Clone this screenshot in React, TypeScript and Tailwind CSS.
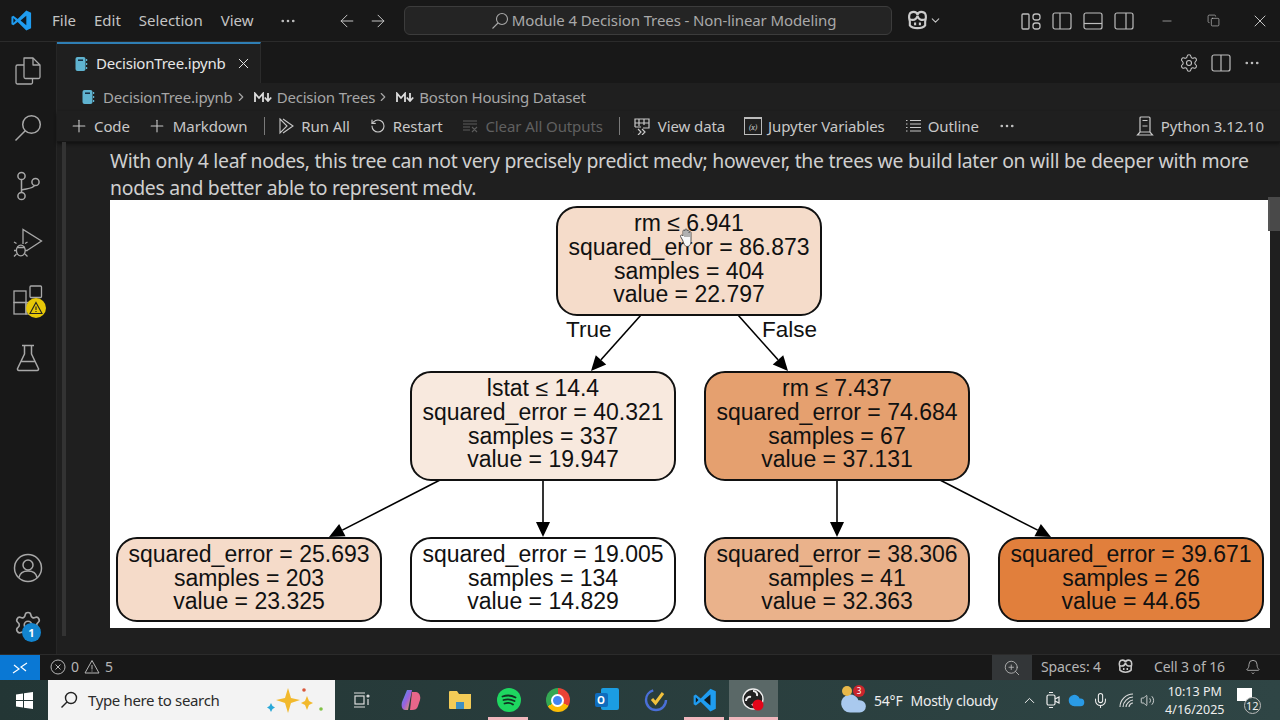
import React from "react";
import {
  Plus, RotateCcw, Settings, MoreHorizontal, X, ArrowLeft, ArrowRight,
  ChevronRight, ChevronDown, ChevronUp, Minus, Bell, ZoomIn, Mic, Volume2, Cloud, Copy,
} from "lucide-react";

const ui = "font-['Noto_Sans','Open_Sans',sans-serif]";

function Notebook({ s = 16 }: { s?: number }) {
  return (
    <svg width={s} height={s} viewBox="0 0 16 16">
      <rect x="2.5" y="1" width="10" height="14" rx="2" fill="#5fb3d0" />
      <rect x="5" y="3.5" width="5" height="1.4" fill="#123" />
      <rect x="13" y="3" width="1.2" height="2" fill="#5fb3d0" />
      <rect x="13" y="7" width="1.2" height="2" fill="#5fb3d0" />
      <rect x="13" y="11" width="1.2" height="2" fill="#5fb3d0" />
    </svg>
  );
}

function VsLogo({ s = 24 }: { s?: number }) {
  return (
    <svg width={s} height={s} viewBox="0 0 24 24">
      <path d="M17 1.5 L22 4 V20 L17 22.5 L8 13.5 L3.5 17 L1.5 16 V8 L3.5 7 L8 10.5 Z" fill="#1f9cf0" />
      <path d="M17 7 L11 12 L17 17 Z" fill="#0f1a22" />
      <path d="M3.5 9.5 L6 12 L3.5 14.5 Z" fill="#0f1a22" />
    </svg>
  );
}

function Copilot({ s = 22, c = "#cccccc" }: { s?: number; c?: string }) {
  return (
    <svg width={s} height={s} viewBox="0 0 24 24" fill="none" stroke={c} strokeWidth="2.2">
      <path d="M4 13 C2 6 4 3 8 3 C10 3 11.5 4 12 6 C12.5 4 14 3 16 3 C20 3 22 6 20 13 V17 C17 21 7 21 4 17 Z" />
      <path d="M4 11 C8 12 11 11 12 7 C13 11 16 12 20 11" />
      <path d="M9.5 14 V17 M14.5 14 V17" />
    </svg>
  );
}

function Pane({ kind }: { kind: "left" | "bottom" | "right" | "split" }) {
  return (
    <svg width="22" height="22" viewBox="0 0 22 22" fill="none" stroke="#bdbdbd" strokeWidth="1.2">
      <rect x="2" y="3" width="18" height="16" rx="2" />
      {kind === "left" && <path d="M9 3 V19" />}
      {kind === "split" && <path d="M11 3 V19" />}
      {kind === "right" && <path d="M13 3 V19" />}
      {kind === "bottom" && <path d="M2 13.5 H20" />}
    </svg>
  );
}

function Node({ x, y, h, pb, fill, lines }: { x: number; y: number; h: number; pb: number; fill: string; lines: string[] }) {
  return (
    <div
      className="absolute w-[266px] rounded-[21px] border-2 border-[#111] flex flex-col items-center justify-center text-[#111] text-[23px] leading-[23.7px] font-['Liberation_Sans',sans-serif]"
      style={{ left: x, top: y, height: h, background: fill, paddingBottom: pb }}
    >
      {lines.map((l) => <div key={l}>{l}</div>)}
    </div>
  );
}

function Tree() {
  const edges = [
    [531, 115, 481, 171],
    [628, 115, 678, 171],
    [330, 280, 219, 337],
    [433, 280, 433, 337],
    [727, 280, 727, 337],
    [830, 280, 941, 337],
  ];
  return (
    <div className="relative w-[1160px] h-[428px] bg-white overflow-hidden shrink-0">
      <svg className="absolute inset-0" width="1160" height="428">
        {edges.map(([a, b, c, d], i) => {
          const len = Math.hypot(c - a, d - b);
          const ux = (c - a) / len, uy = (d - b) / len;
          const bx = c - ux * 15, by = d - uy * 15;
          return (
            <g key={i}>
              <line x1={a} y1={b} x2={bx} y2={by} stroke="#000" strokeWidth="1.6" />
              <polygon points={`${c},${d} ${bx - uy * 7},${by + ux * 7} ${bx + uy * 7},${by - ux * 7}`} fill="#000" />
            </g>
          );
        })}
      </svg>
      <Node x={446} y={6} h={110} pb={3} fill="#f5dcca" lines={["rm ≤ 6.941", "squared_error = 86.873", "samples = 404", "value = 22.797"]} />
      <Node x={300} y={171} h={110} pb={3} fill="#f8e9de" lines={["lstat ≤ 14.4", "squared_error = 40.321", "samples = 337", "value = 19.947"]} />
      <Node x={594} y={171} h={110} pb={3} fill="#e5a06f" lines={["rm ≤ 7.437", "squared_error = 74.684", "samples = 67", "value = 37.131"]} />
      <Node x={6} y={337} h={85} pb={2} fill="#f5dbc9" lines={["squared_error = 25.693", "samples = 203", "value = 23.325"]} />
      <Node x={300} y={337} h={85} pb={2} fill="#ffffff" lines={["squared_error = 19.005", "samples = 134", "value = 14.829"]} />
      <Node x={594} y={337} h={85} pb={2} fill="#eab28b" lines={["squared_error = 38.306", "samples = 41", "value = 32.363"]} />
      <Node x={888} y={337} h={85} pb={2} fill="#e17f3c" lines={["squared_error = 39.671", "samples = 26", "value = 44.65"]} />
      <div className="absolute left-[456px] top-[117px] text-[#111] text-[22.5px] leading-[26px] font-['Liberation_Sans',sans-serif]">True</div>
      <div className="absolute left-[652px] top-[117px] text-[#111] text-[22.5px] leading-[26px] font-['Liberation_Sans',sans-serif]">False</div>
      <svg className="absolute left-[569px] top-[28px]" width="17" height="20" viewBox="0 0 17 20">
        <path d="M3.5 12 L1.5 8.5 C1 7 3 6.5 4 8 V3 C4 1.6 6 1.6 6 3 V2 C6 .6 8 .6 8 2 V3 C8 1.8 10 1.8 10 3 V4.5 C10 3.4 12 3.4 12 4.5 V12 C12 16 11 18.5 8 18.5 C5.5 18.5 4.8 15 3.5 12 Z" fill="#f8f8f8" stroke="#444" strokeWidth=".9" />
        <path d="M6 3 V9 M8 3 V9 M10 4 V9" stroke="#444" strokeWidth=".8" />
      </svg>
    </div>
  );
}

function Slot({ children }: { children: React.ReactNode }) {
  return <div className="h-[57.5px] w-full flex items-center justify-center shrink-0">{children}</div>;
}

function ActivityBar() {
  const c = "#a8a8a8";
  return (
    <aside className="w-[57px] shrink-0 bg-[#181818] border-r border-[#262626] flex flex-col items-center">
      <Slot>
        <svg width="28" height="30" viewBox="0 0 28 30" fill="none" stroke={c} strokeWidth="1.3" strokeLinejoin="round">
          <path d="M10 2 H19 L26 9 V21 a1.5 1.5 0 0 1-1.5 1.5 H11.5 A1.5 1.5 0 0 1 10 21 Z" />
          <path d="M19 2 V9 H26" />
          <path d="M10 9 H3.5 A1.5 1.5 0 0 0 2 10.5 V26.5 A1.5 1.5 0 0 0 3.5 28 H17 A1.5 1.5 0 0 0 18.5 26.5 V22.5" />
        </svg>
      </Slot>
      <Slot>
        <svg width="28" height="28" viewBox="0 0 28 28" fill="none" stroke={c} strokeWidth="1.5">
          <circle cx="17.5" cy="10.5" r="8.8" /><path d="M11.2 16.8 L1.5 26.5" />
        </svg>
      </Slot>
      <Slot>
        <svg width="24" height="30" viewBox="0 0 24 30" fill="none" stroke={c} strokeWidth="1.5">
          <circle cx="5.5" cy="5" r="3.6" /><circle cx="5.5" cy="25" r="3.6" /><circle cx="19.5" cy="11" r="3.6" />
          <path d="M5.5 8.6 V21.4 M5.5 19 C11 17.5 17 17.5 18.5 14.5" />
        </svg>
      </Slot>
      <Slot>
        <svg width="30" height="30" viewBox="0 0 30 30" fill="none" stroke={c} strokeWidth="1.3">
          <path d="M10 16 V1.5 L28.5 13 L14 22.5" />
          <ellipse cx="7.8" cy="22.5" rx="4.4" ry="5.4" fill="#181818" />
          <path d="M4 19.5 H12 M3.5 15.5 L1 14 M12 15.5 L14.5 14 M1 22.5 H3.5 M12 22.5 H14.5 M3.5 26 L1 28.5 M12 26 L14.5 28.5" />
        </svg>
      </Slot>
      <Slot>
        <div className="relative w-[32px] h-[32px] left-[1px]">
          <svg width="30" height="30" viewBox="0 0 30 30" fill="none" stroke={c} strokeWidth="1.3">
            <rect x="1" y="6" width="12" height="11.5" /><rect x="1" y="17.5" width="12" height="11.5" /><rect x="13" y="17.5" width="11" height="11.5" /><rect x="17" y="1" width="11.5" height="11.5" rx="1" />
          </svg>
          <div className="absolute left-[13px] top-[13px] w-[20px] h-[20px] rounded-full bg-[#e6c708] flex items-center justify-center">
            <svg width="14" height="14" viewBox="0 0 14 14" fill="none" stroke="#222" strokeWidth="1.1"><path d="M7 1.5 L13 12.5 H1 Z M7 5.5 V9 M7 10 V11" /></svg>
          </div>
        </div>
      </Slot>
      <Slot>
        <svg width="24" height="28" viewBox="0 0 24 28" fill="none" stroke={c} strokeWidth="1.5" strokeLinejoin="round">
          <path d="M6 1.5 H18 M8.5 1.5 V10 L1.8 24 A1.5 1.5 0 0 0 3 26.5 H21 A1.5 1.5 0 0 0 22.2 24 L15.5 10 V1.5 M5 17.5 H19" />
        </svg>
      </Slot>
      <div className="flex-1" />
      <Slot>
        <svg width="30" height="30" viewBox="0 0 30 30" fill="none" stroke={c} strokeWidth="1.5">
          <circle cx="15" cy="15" r="13.5" /><circle cx="15" cy="12" r="5" /><path d="M6 24.5 C7 19.5 11 18 15 18 C19 18 23 19.5 24 24.5" />
        </svg>
      </Slot>
      <Slot>
        <div className="relative w-[30px] h-[30px]">
          <Settings size={30} color={c} strokeWidth={1.3} />
          <div className="absolute left-[9px] top-[13px] w-[19px] h-[19px] rounded-full bg-[#1285d0] text-white text-[11px] font-bold flex items-center justify-center">1</div>
        </div>
      </Slot>
    </aside>
  );
}

function TitleBar() {
  return (
    <header className="h-[42px] shrink-0 bg-[#181818] border-b border-[#2b2b2b] flex items-center text-[#c4c4c4] text-[15px]">
      <div className="w-[42px] flex justify-center"><VsLogo s={23} /></div>
      <div className="flex items-center gap-[18px] ml-[10px]">
        <span>File</span><span>Edit</span><span>Selection</span><span>View</span>
        <MoreHorizontal size={18} strokeWidth={1.5} className="ml-[7px]" />
      </div>
      <div className="flex items-center gap-[11px] ml-[40px]">
        <ArrowLeft size={20} strokeWidth={1.2} /><ArrowRight size={20} strokeWidth={1.2} />
      </div>
      <div className="ml-[16px] w-[488px] h-[29px] pl-[32px] rounded-[6px] border border-[#3c3c3c] bg-[#242424] flex items-center justify-center gap-[3px] text-[#a9a9a9] tracking-[-0.1px]">
        <svg width="18" height="18" viewBox="0 0 18 18" fill="none" stroke="#a9a9a9" strokeWidth="1.1"><circle cx="11" cy="7" r="5.5" /><path d="M7 11 L1.5 16.5" /></svg>
        <span>Module 4 Decision Trees - Non-linear Modeling</span>
      </div>
      <div className="ml-[14px] flex items-center"><Copilot s={23} /><ChevronDown size={13} /></div>
      <div className="flex items-center gap-[9px] ml-[78px]">
        <svg width="22" height="22" viewBox="0 0 22 22" fill="none" stroke="#bdbdbd" strokeWidth="1.3"><rect x="2" y="4" width="7" height="15" rx="1" /><rect x="13" y="4" width="7" height="6" rx="2.5" /><rect x="13" y="13" width="7" height="6" rx="2.5" /></svg>
        <Pane kind="left" /><Pane kind="bottom" /><Pane kind="right" />
      </div>
      <Minus size={14} className="ml-[25px]" strokeWidth={1.2} />
      <Copy size={13} strokeWidth={1.2} className="ml-[33px]" />
      <X size={20} strokeWidth={1.2} className="ml-[30px]" />
    </header>
  );
}

function TabRow() {
  return (
    <div className="h-[41px] shrink-0 bg-[#181818] flex items-stretch">
      <div className="w-[204px] bg-[#1f1f1f] border-t-2 border-[#2f7fb5] border-r border-r-[#2b2b2b] flex items-center text-[#e6e6e6] text-[15px] tracking-[-0.2px]">
        <span className="ml-[16px]"><Notebook /></span>
        <span className="ml-[7px]">DecisionTree.ipynb</span>
        <X size={17} strokeWidth={1.4} className="ml-[9px]" />
      </div>
      <div className="flex-1 flex items-center justify-end gap-[11px] pr-[19px] text-[#c4c4c4]">
        <Settings size={20} strokeWidth={1.3} />
        <Pane kind="split" />
        <MoreHorizontal size={18} strokeWidth={1.5} />
      </div>
    </div>
  );
}

function MdIcon({ ml }: { ml: string }) {
  return (
    <svg className={ml} width="18" height="10" viewBox="0 0 18 10" fill="none" stroke="#dcdcdc" strokeWidth="1.8">
      <path d="M1 10 V1.5 L5 6 L9 1.5 V10" /><path d="M14 1 V8 M10.8 5.5 L14 9 L17.2 5.5" />
    </svg>
  );
}

function Breadcrumb() {
  return (
    <div className="h-[28px] shrink-0 bg-[#1f1f1f] flex items-center pl-[23px] text-[#a6a6a6] text-[15px] tracking-[-0.2px]">
      <Notebook />
      <span className="ml-[7px]">DecisionTree.ipynb</span>
      <ChevronRight size={14} className="ml-[1px]" />
      <MdIcon ml="ml-[6px]" /><span className="ml-[5px]">Decision Trees</span>
      <ChevronRight size={14} className="ml-[1px]" />
      <MdIcon ml="ml-[6px]" /><span className="ml-[5px]">Boston Housing Dataset</span>
    </div>
  );
}

function Sep({ ml }: { ml: string }) {
  return <span className={`${ml} w-px h-[18px] bg-[#7a7a7a] shrink-0`} />;
}

function Toolbar() {
  return (
    <div className="h-[31px] shrink-0 bg-[#1f1f1f] border-b border-[#161616] flex items-center pl-[12px] pr-[16px] text-[#c8c8c8] text-[15px] tracking-[-0.1px] shadow-[0_2px_3px_#111] relative">
      <Plus size={20} strokeWidth={1.3} /><span className="ml-[5px]">Code</span>
      <Plus size={20} strokeWidth={1.3} className="ml-[17px]" /><span className="ml-[6px]">Markdown</span>
      <Sep ml="ml-[17px]" />
      <svg className="ml-[13px]" width="18" height="18" viewBox="0 0 18 18" fill="none" stroke="#c8c8c8" strokeWidth="1.1"><path d="M2 2 L9 9 L2 16 Z M5 2 L15 9 L5 16" /></svg>
      <span className="ml-[5px]">Run All</span>
      <RotateCcw size={16} strokeWidth={1.7} className="ml-[20px]" />
      <span className="ml-[7px]">Restart</span>
      <svg className="ml-[20px]" width="17" height="16" viewBox="0 0 17 16" stroke="#5c5c5c" strokeWidth="1.1" fill="none"><path d="M1 3 H15 M1 6 H15 M1 9 H8 M1 12 H8 M10 9 L15 14 M15 9 L10 14" /></svg>
      <span className="ml-[6px] text-[#606060]">Clear All Outputs</span>
      <Sep ml="ml-[16px]" />
      <svg className="ml-[12px]" width="19" height="18" viewBox="0 0 19 18" fill="none" stroke="#c8c8c8" strokeWidth="1.2">
        <path d="M3 10 V2 H17 V11 H11 M3 6 H17 M3 10 H9 M7 2 V9 M12 2 V8" />
        <path d="M1 12 h.1 M1 15 h.1 M4 13 h.1 M6 12 L9 15 L6 18 M10 12 L13 15 L10 18" />
      </svg>
      <span className="ml-[7px]">View data</span>
      <span className="ml-[19px] w-[18px] h-[18px] border border-[#bbb] text-[8px] flex items-center justify-center pt-[3px] font-serif italic shrink-0 shadow-[inset_0_3px_0_-2px_#bbb]">(x)</span>
      <span className="ml-[6px]">Jupyter Variables</span>
      <svg className="ml-[20px]" width="17" height="16" viewBox="0 0 17 16" stroke="#c8c8c8" strokeWidth="1.2" fill="none"><path d="M5 2.5 H16 M5 6 H16 M5 9.5 H16 M5 13 H16 M1 2.5 H2.5 M1 6 H2.5 M1 9.5 H2.5 M1 13 H2.5" /></svg>
      <span className="ml-[6px]">Outline</span>
      <MoreHorizontal size={18} strokeWidth={1.5} className="ml-[19px]" />
      <div className="flex-1" />
      <svg width="18" height="20" viewBox="0 0 18 20" fill="none" stroke="#c8c8c8" strokeWidth="1.2"><path d="M4 16 V2 a1 1 0 0 1 1-1 H13 a1 1 0 0 1 1 1 V16 M6.5 4.5 H11.5 M6.5 10 H11.5 M1.5 19 L4 16 H14 L16.5 19 Z" /></svg>
      <span className="ml-[7px]">Python 3.12.10</span>
    </div>
  );
}

function Editor() {
  return (
    <main className="flex-1 min-w-0 flex flex-col bg-[#1f1f1f]">
      <TabRow />
      <Breadcrumb />
      <Toolbar />
      <div className="flex-1 min-h-0 relative flex overflow-hidden">
        <div className="w-[4px] ml-[5px] bg-[#333] h-[494px]" />
        <div className="ml-[44px] flex flex-col">
          <p className="text-[19.4px] leading-[27px] tracking-[-0.29px] text-[#cfcfcf] w-[1160px] pt-[5px] h-[58px]">
            With only 4 leaf nodes, this tree can not very precisely predict medv; however, the trees we build later on will be deeper with more nodes and better able to represent medv.
          </p>
          <Tree />
        </div>
        <div className="absolute right-0 top-[55px] w-[12px] h-[34px] bg-[#4c4c4c]/95" />
      </div>
    </main>
  );
}

function StatusBar() {
  return (
    <footer className="h-[26px] shrink-0 bg-[#181818] border-t border-[#2b2b2b] flex items-stretch text-[#b5b5b5] text-[14px] tracking-[-0.1px]">
      <div className="w-[40px] bg-[#0a78d4] flex items-center justify-center">
        <svg width="16" height="14" viewBox="0 0 16 14" fill="none" stroke="#fff" strokeWidth="1.2"><path d="M1 12 L7 8 L2 4 M15 2 L9 6 L14 10" /></svg>
      </div>
      <div className="flex items-center ml-[10px] gap-[5px] pb-[2px]">
        <svg width="16" height="16" viewBox="0 0 16 16" fill="none" stroke="#b5b5b5" strokeWidth="1"><circle cx="8" cy="8" r="7" /><path d="M5.5 5.5 L10.5 10.5 M10.5 5.5 L5.5 10.5" /></svg>
        <span>0</span>
        <svg width="16" height="16" viewBox="0 0 16 16" fill="none" stroke="#b5b5b5" strokeWidth="1"><path d="M8 1.5 L15 14 H1 Z M8 6 V10.5 M8 11.5 V12.5" /></svg>
        <span>5</span>
      </div>
      <div className="flex-1" />
      <div className="w-[40px] bg-[#333638] flex items-center justify-center"><ZoomIn size={18} strokeWidth={1.2} /></div>
      <span className="self-center ml-[9px] mb-[2px]">Spaces: 4</span>
      <span className="self-center ml-[16px] mb-[2px]"><Copilot s={17} c="#c8c8c8" /></span>
      <span className="self-center ml-[20px] mb-[2px]">Cell 3 of 16</span>
      <Bell size={16} strokeWidth={1.3} className="self-center ml-[20px] mr-[19px] mb-[2px]" />
    </footer>
  );
}

function TaskSlot({ children, active, line }: { children: React.ReactNode; active?: boolean; line?: boolean }) {
  return (
    <div className={`relative w-[49px] h-[40px] flex items-center justify-center shrink-0 ${active ? "bg-[#5a6867]" : ""}`}>
      {children}
      {active && <span className="absolute left-0 right-0 bottom-0 h-[3px] bg-[#f0b7bd]" />}
      {line && <span className="absolute left-[4px] right-[5px] bottom-0 h-[3px] bg-[#f0b7bd]" />}
    </div>
  );
}

function Taskbar() {
  return (
    <div className="h-[40px] shrink-0 bg-gradient-to-r from-[#233635] to-[#2f4545] flex items-center relative text-[#eeeeee]">
      <div className="w-[48px] flex justify-center">
        <svg width="17" height="17" viewBox="0 0 17 17" fill="#fff"><path d="M0 2.4 L7 1.4 V8 H0 Z M8 1.2 L17 0 V8 H8 Z M0 9 H7 V15.6 L0 14.6 Z M8 9 H17 V17 L8 15.8 Z" /></svg>
      </div>
      <div className="w-[287px] h-[40px] bg-[#f3f3f3] flex items-center text-[#2b2b2b] text-[15px] tracking-[-0.35px] relative shrink-0">
        <svg className="ml-[12px]" width="18" height="18" viewBox="0 0 18 18" fill="none" stroke="#222" strokeWidth="1.4"><circle cx="11" cy="7" r="5.5" /><path d="M7 11 L1.5 16.5" /></svg>
        <span className="ml-[10px]">Type here to search</span>
        <svg className="absolute left-[216px] top-[6px]" width="66" height="30" viewBox="0 0 66 30">
          <path d="M24 2 L27 12 L36 14 L27 17 L24 27 L21 17 L12 14 L21 12 Z" fill="#f2b92c" />
          <path d="M43 10 L45 15 L49 17 L45 19 L43 24 L41 19 L37 17 L41 15 Z" fill="#f2b92c" />
          <path d="M7 17 L8.5 20 L11 21.5 L8.5 23 L7 26 L5.5 23 L3 21.5 L5.5 20 Z" fill="#29a8d8" />
          <circle cx="40" cy="4" r="1.8" fill="#d9583c" /><circle cx="57" cy="23" r="1.8" fill="#80c245" />
        </svg>
      </div>
      <div className="w-[2px] shrink-0" />
      <TaskSlot>
        <svg width="17" height="18" viewBox="0 0 17 18" fill="none" stroke="#ddd" strokeWidth="1.2"><rect x="2" y="5" width="9" height="8" /><path d="M1 2 H12 M1 16 H12" /><circle cx="15" cy="5" r="1" fill="#ddd" /><path d="M15 8 V14" /></svg>
      </TaskSlot>
      <TaskSlot>
        <svg width="20" height="22" viewBox="0 0 20 22">
          <defs><linearGradient id="cp" x1="0" y1="0" x2="1" y2="1"><stop offset="0" stopColor="#3aa0e8" /><stop offset=".5" stopColor="#9b5fe0" /><stop offset="1" stopColor="#f2a93b" /></linearGradient></defs>
          <path d="M6 1 H11 L7 21 H4 C1 21 0 17 1 13 Z" fill="url(#cp)" /><path d="M11 3 H15 C18 3 20 7 19 11 L17 17 C16 20 14 21 11 21 H9 Z" fill="#e8668a" />
        </svg>
      </TaskSlot>
      <TaskSlot>
        <svg width="22" height="20" viewBox="0 0 22 20"><path d="M0 2 a1 1 0 0 1 1-1 H8 L10 4 H22 V18 a1 1 0 0 1-1 1 H1 a1 1 0 0 1-1-1 Z" fill="#f2cb57" /><path d="M7 12 H15 V19 H7 Z" fill="#3d8fc4" /></svg>
      </TaskSlot>
      <TaskSlot line>
        <div className="w-[24px] h-[24px] rounded-full bg-[#1ed760] flex items-center justify-center">
          <svg width="16" height="14" viewBox="0 0 16 14" fill="none" stroke="#132" strokeWidth="1.8" strokeLinecap="round"><path d="M1.5 3.5 C6 2 11 2.5 14.5 4.5 M2.5 7 C6 6 10.5 6.5 13.5 8 M3.5 10.5 C6.5 9.5 10 10 12 11.5" /></svg>
        </div>
      </TaskSlot>
      <TaskSlot>
        <div className="w-[24px] h-[24px] rounded-full flex items-center justify-center" style={{ background: "conic-gradient(#ea4335 0 33%, #fbbc05 33% 66%, #34a853 66% 100%)" }}>
          <div className="w-[9px] h-[9px] rounded-full bg-[#4285f4] border-2 border-white box-content" />
        </div>
      </TaskSlot>
      <TaskSlot>
        <div className="relative w-[24px] h-[24px]">
          <div className="absolute right-0 top-0 w-[18px] h-[22px] bg-[#1b9de2] rounded-[2px]" />
          <div className="absolute left-0 top-[5px] w-[13px] h-[14px] bg-[#0f6cbd] rounded-[2px] text-white text-[10px] font-bold leading-[14px] text-center">O</div>
        </div>
      </TaskSlot>
      <TaskSlot>
        <svg width="24" height="24" viewBox="0 0 24 24" fill="none"><circle cx="12" cy="12" r="10" stroke="#4a6fd8" strokeWidth="2.4" strokeDasharray="44 20" /><path d="M8 11 L11.5 15 L19 5" stroke="#f2c13c" strokeWidth="3" /></svg>
      </TaskSlot>
      <TaskSlot line><VsLogo s={26} /></TaskSlot>
      <TaskSlot active>
        <svg width="26" height="26" viewBox="0 0 26 26"><circle cx="12" cy="12" r="10" fill="#222" stroke="#eee" strokeWidth="1.4" /><path d="M12 4 a4 4 0 0 1 4 5 M5 14 a4 4 0 0 1 5-4 M18 16 a4 4 0 0 1-7 1" stroke="#eee" strokeWidth="2" fill="none" /><circle cx="17" cy="18" r="5.5" fill="#e3061a" /></svg>
      </TaskSlot>
      <div className="relative ml-[62px] w-[26px] h-[26px] shrink-0">
        <Cloud size={27} fill="#a9c9ee" color="#a9c9ee" className="absolute left-0 top-[3px]" />
        <span className="absolute left-[2px] -top-[1px] w-[10px] h-[10px] rounded-full bg-[#e8b84a]" />
        <span className="absolute left-[13px] -top-[2px] w-[12px] h-[12px] rounded-full bg-[#c9252d] text-white text-[8px] leading-[12px] text-center">3</span>
      </div>
      <span className="ml-[8px] text-[14px] tracking-[-0.2px]">54°F</span>
      <span className="ml-[8px] text-[14px] tracking-[-0.25px]">Mostly cloudy</span>
      <ChevronUp size={17} strokeWidth={1.4} className="ml-[23px] shrink-0" />
      <svg className="ml-[7px] shrink-0" width="16" height="20" viewBox="0 0 16 20" fill="none" stroke="#eee" strokeWidth="1.2"><rect x="2" y="5" width="8" height="10" rx="1.5" /><path d="M10 9 L14 7 V13 L10 11 M4 2.5 H8 M4 17.5 H8" /></svg>
      <Cloud size={17} fill="#2a9be6" color="#2a9be6" className="ml-[7px] shrink-0" />
      <Mic size={17} strokeWidth={1.5} className="ml-[7px] shrink-0" />
      <svg className="ml-[10px] shrink-0" width="15" height="15" viewBox="0 0 15 15" fill="none" stroke="#ddd" strokeWidth="1.1"><path d="M1 14 C1 7 7 1 14 1 M4 14 C4 9 9 4 14 4 M7 14 C7 11 11 7 14 7 M10 14 C10 12 12 10 14 10" /></svg>
      <Volume2 size={15} strokeWidth={1.3} className="ml-[6px] shrink-0" />
      <div className="ml-[9px] w-[62px] text-center text-[12.5px] leading-[18px] pt-[2px] shrink-0">
        <div>10:13 PM</div><div>4/16/2025</div>
      </div>
      <div className="relative ml-[5px] w-[30px] h-[30px] shrink-0">
        <div className="absolute left-[6px] top-[3px] w-[15px] h-[13px] bg-white" />
        <div className="absolute left-[13px] top-[12px] w-[17px] h-[17px] rounded-full bg-[#2f4545] border border-[#bbb] text-[11px] text-center leading-[15px]">12</div>
      </div>
    </div>
  );
}

export default function App() {
  return (
    <div className={`w-[1280px] h-[720px] overflow-hidden flex flex-col bg-[#181818] ${ui}`}>
      <TitleBar />
      <div className="flex-1 min-h-0 flex">
        <ActivityBar />
        <Editor />
      </div>
      <StatusBar />
      <Taskbar />
    </div>
  );
}
